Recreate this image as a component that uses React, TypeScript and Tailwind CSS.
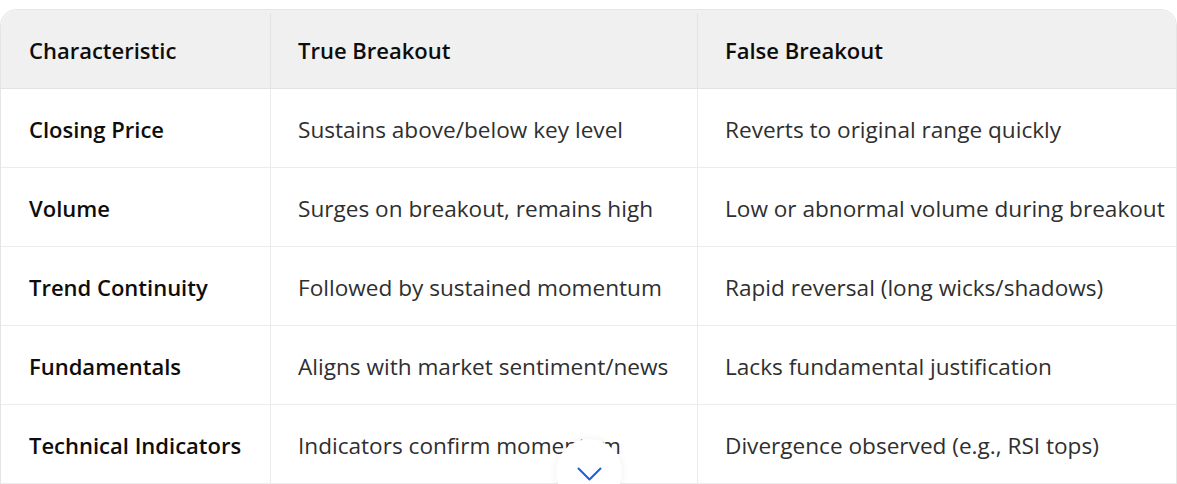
const rows = [
  ["Closing Price", "Sustains above/below key level", "Reverts to original range quickly"],
  ["Volume", "Surges on breakout, remains high", "Low or abnormal volume during breakout"],
  ["Trend Continuity", "Followed by sustained momentum", "Rapid reversal (long wicks/shadows)"],
  ["Fundamentals", "Aligns with market sentiment/news", "Lacks fundamental justification"],
  ["Technical Indicators", "Indicators confirm momentum", "Divergence observed (e.g., RSI tops)"],
];

const font = { fontFamily: '"Segoe UI", "Open Sans", sans-serif' };

export default function App() {
  return (
    <div className="relative h-[484px] w-[1177px] overflow-hidden bg-white pt-[9px]" style={font}>
      <div className="w-[1177px] rounded-t-[16px] border border-[#e5e5e5] text-[22px]">
        <div className="flex h-[79px] items-center rounded-t-[16px] border-b border-[#e3e3e3] bg-[#f0f0f0] pt-[3px] font-semibold text-[#0d0d0d]">
          <div className="flex h-full w-[270px] items-center border-r border-[#e3e3e3] pl-[28px]">Characteristic</div>
          <div className="flex h-full w-[427px] items-center border-r border-[#e3e3e3] pl-[27px]">True Breakout</div>
          <div className="flex h-full flex-1 items-center pl-[27px]">False Breakout</div>
        </div>
        {rows.map((r) => (
          <div key={r[0]} className="flex h-[79px] items-center border-b border-[#ececec]">
            <div className="flex h-full w-[270px] items-center border-r border-[#ececec] pl-[28px] pt-[3px] font-semibold text-[#0d0d0d]">{r[0]}</div>
            <div className="flex h-full w-[427px] items-center border-r border-[#ececec] pl-[27px] pt-[3px] text-[22.6px] text-[#2f2f2f]">{r[1]}</div>
            <div className="flex h-full flex-1 items-center whitespace-nowrap pl-[27px] pt-[3px] text-[22.6px] text-[#2f2f2f]">{r[2]}</div>
          </div>
        ))}
      </div>
      <button className="absolute left-[556px] top-[439px] h-[66px] w-[66px] rounded-full bg-white shadow-[0_0_10px_rgba(0,0,0,0.06)]">
        <svg className="absolute left-[21px] top-[28px]" width="25" height="15" viewBox="0 0 25 15" fill="none">
          <polyline points="1.5,1.5 12.5,12.5 23.5,1.5" stroke="#1d5fd6" strokeWidth="2" strokeLinecap="round" strokeLinejoin="round" />
        </svg>
      </button>
    </div>
  );
}
